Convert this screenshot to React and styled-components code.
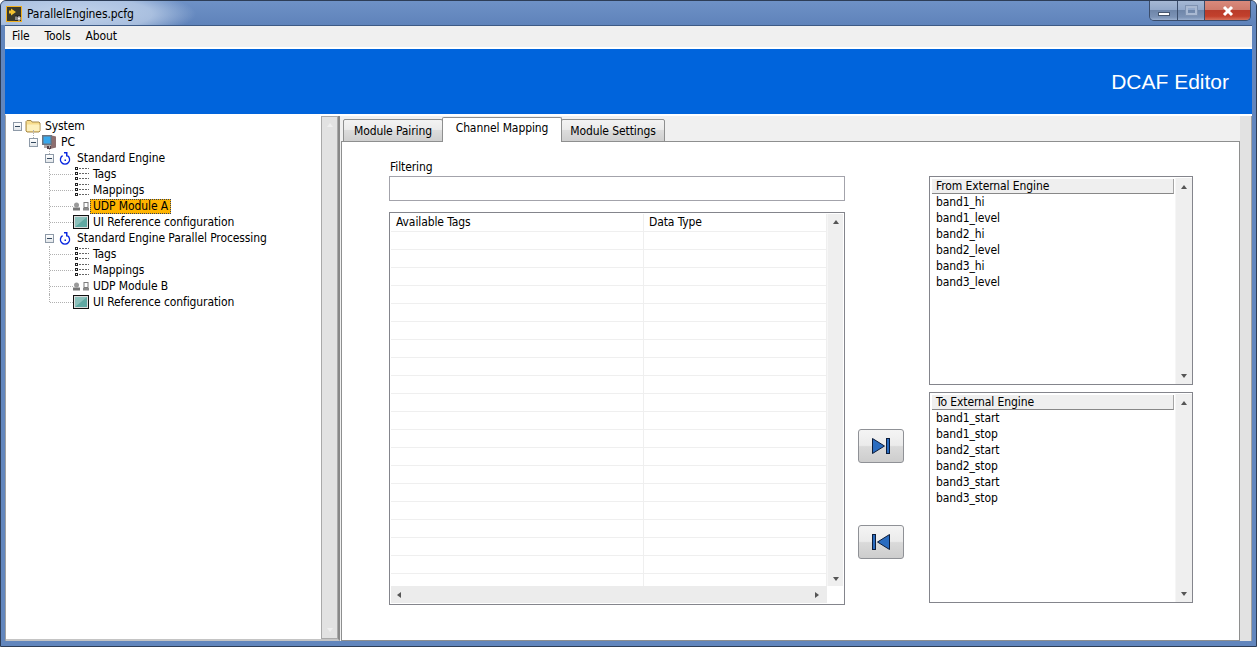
import React from 'react'
import styled, { createGlobalStyle } from 'styled-components'

const Global = createGlobalStyle`
  html, body { margin: 0; padding: 0; height: 100%; overflow: hidden; }
  #root { height: 647px; }
  * { box-sizing: border-box; }
  body {
    font-family: "DejaVu Sans Condensed", "Liberation Sans", Arial, sans-serif;
    font-size: 12px;
    letter-spacing: -0.1px;
    color: #000;
  }
`

const Window = styled.div`
  width: 1257px;
  height: 647px;
  display: flex;
  flex-direction: column;
  background: #6286bd;
  border: 1px solid #2d3d57;
  border-radius: 6px 6px 0 0;
  padding: 0 4px 5px;
  overflow: hidden;
`

const TitleBar = styled.div`
  height: 24px;
  flex: none;
  margin: 0 -4px;
  padding: 0 4px 0 5px;
  display: flex;
  align-items: flex-start;
  gap: 5px;
  background:
    radial-gradient(ellipse 125px 26px at 70px 13px, rgba(205, 220, 240, .9) 0, rgba(205, 220, 240, .65) 65%, rgba(205, 220, 240, 0) 100%),
    linear-gradient(#6e91c6, #5f83ba);
`

const AppIcon = styled.svg`
  width: 16px;
  height: 16px;
  margin-top: 5px;
  flex: none;
`

const TitleText = styled.span`
  margin-top: 5px;
  line-height: 16px;
  flex: 1;
`

const Caption = styled.div`
  display: flex;
  height: 20px;
  margin-right: 1px;
  border: 1px solid #3b4d6b;
  border-top: 0;
  border-radius: 0 0 5px 5px;
  overflow: hidden;
`

const CaptionButton = styled.div`
  width: ${p => p.$w}px;
  display: flex;
  align-items: center;
  justify-content: center;
  background: ${p => p.$close
    ? 'linear-gradient(#d98a7c 0, #cf7b6c 45%, #b93b2a 50%, #c2402c 80%, #d66f5a 100%)'
    : 'linear-gradient(#a5b8d4 0, #93a9ca 45%, #6f86a9 50%, #7c93b6 85%, #9bb0cf 100%)'};
  & + & { border-left: 1px solid #3b4d6b; }
`

const MinGlyph = styled.span`
  width: 12px;
  height: 4px;
  margin-top: 6px;
  background: #fff;
  border: 1px solid #46566e;
`

const MaxGlyph = styled.span`
  width: 11px;
  height: 9px;
  border: 2px solid #a9b9d2;
  outline: 1px solid #7f93b2;
`

const MenuBar = styled.div`
  height: 22px;
  flex: none;
  background: #f0f0f0;
  border-top: 1px solid #3d5a85;
  display: flex;
  align-items: center;
  padding: 0 0 2px 7px;
  gap: 15px;
`

const MenuItem = styled.span`
  line-height: 16px;
`

const Banner = styled.div`
  height: 67px;
  flex: none;
  background: #0064dc;
  border-top: 2px solid #fff;
  display: flex;
  align-items: center;
  justify-content: flex-end;
  padding: 0 23px 0 0;
  color: #fff;
  font-family: "Liberation Sans", Arial, sans-serif;
  font-size: 21px;
  letter-spacing: 0;
`

const Body = styled.div`
  flex: 1;
  min-height: 0;
  display: flex;
  background: #f0f0f0;
  border-top: 2px solid #fff;
  border-left: 1px solid #a0a0a0;
`

const TreePanel = styled.div`
  width: 334px;
  flex: none;
  display: flex;
  background: #fff;
  border-bottom: 2px solid #c4c4c4;
  border-right: 2px solid #888;
  margin-right: 1px;
`

const Tree = styled.div`
  flex: 1;
  padding-top: 2px;
`

const Row = styled.div`
  position: relative;
  height: 16px;
  display: flex;
  align-items: center;
  padding-left: ${p => p.$indent}px;
  white-space: nowrap;
`

const Expander = styled.span`
  width: 9px;
  height: 9px;
  flex: none;
  border: 1px solid #8e9aa8;
  background: linear-gradient(#fff, #e2e6ea);
  position: relative;
  &::after {
    content: '';
    position: absolute;
    left: 1px;
    top: 3px;
    width: 5px;
    height: 1px;
    background: #34495e;
  }
`

const Dots = styled.span`
  position: absolute;
  left: ${p => p.$x}px;
  top: ${p => p.$y}px;
  ${p => p.$h ? `height: ${p.$h}px; border-left: 1px dotted #b0b0b0;` : ''}
  ${p => p.$w ? `width: ${p.$w}px; border-top: 1px dotted #b0b0b0;` : ''}
`

const NodeIcon = styled.svg`
  flex: none;
  width: ${p => p.$size || 16}px;
  height: 16px;
  margin-left: ${p => p.$gap || 0}px;
`

const Label = styled.span`
  margin-left: ${p => p.$gap}px;
  line-height: 15px;
  ${p => p.$selected && `
    margin-left: 1px;
    padding: 0 3px;
    background: #ffb400;
    outline: 1px dotted #33405a;
    outline-offset: -1px;
  `}
`

const TreeScroll = styled.div`
  width: 17px;
  flex: none;
  background: #e2e2e2;
  border: 1px solid #a9a9a9;
  display: flex;
  flex-direction: column;
  justify-content: space-between;
  align-items: center;
  padding: 6px 0;
`

const Arrow = styled.span`
  width: 0;
  height: 0;
  border-style: solid;
  border-color: transparent;
  ${p => p.$dir === 'up' && `border-width: 0 3.5px 4px; border-bottom-color: ${p.$color || '#555'};`}
  ${p => p.$dir === 'down' && `border-width: 4px 3.5px 0; border-top-color: ${p.$color || '#555'};`}
  ${p => p.$dir === 'left' && `border-width: 3.5px 4px 3.5px 0; border-right-color: ${p.$color || '#555'};`}
  ${p => p.$dir === 'right' && `border-width: 3.5px 0 3.5px 4px; border-left-color: ${p.$color || '#555'};`}
`

const Right = styled.div`
  width: 899px;
  flex: none;
  display: flex;
  flex-direction: column;
  padding-top: 3px;
`

const Tabs = styled.div`
  height: 23px;
  flex: none;
  display: flex;
  align-items: flex-end;
  padding-left: 2px;
  margin-bottom: -1px;
`

const Tab = styled.div`
  position: relative;
  height: ${p => p.$active ? 25 : 23}px;
  width: ${p => p.$w}px;
  display: flex;
  align-items: ${p => p.$active ? 'flex-start' : 'center'};
  justify-content: center;
  padding-top: ${p => p.$active ? 3 : 0}px;
  border: 1px solid #8e8f8f;
  border-bottom: ${p => p.$active ? '0' : '1px solid #8e8f8f'};
  margin-left: ${p => p.$active ? -1 : 0}px;
  margin-right: ${p => p.$active ? -1 : 0}px;
  z-index: ${p => p.$active ? 2 : 1};
  background: ${p => p.$active ? '#fff' : 'linear-gradient(#f3f3f3, #ebebeb 45%, #dcdcdc 50%, #cfcfcf)'};
  border-radius: 2px 2px 0 0;
`

const Panel = styled.div`
  flex: 1;
  min-height: 0;
  background: #fff;
  border: 1px solid #8e8f8f;
  display: flex;
  align-items: flex-start;
  padding: 34px 0 0 47px;
`

const Column = styled.div`
  width: ${p => p.$w}px;
  flex: none;
  display: flex;
  flex-direction: column;
`

const FieldLabel = styled.label`
  line-height: 16px;
  height: 16px;
  margin: -17px 0 1px 1px;
`

const Input = styled.div`
  height: 25px;
  border: 1px solid #a3a3ab;
`

const Table = styled.div`
  margin-top: 11px;
  height: 393px;
  border: 1px solid #84858c;
  display: grid;
  grid-template-columns: 1fr 16px;
  grid-template-rows: 1fr 17px;
  padding: 1px;
`

const Rows = styled.div`
  overflow: hidden;
`

const TableRow = styled.div`
  height: 18px;
  display: grid;
  grid-template-columns: 253px 183px 1fr;
  border-bottom: 1px solid #efefef;
`

const Cell = styled.div`
  padding-left: 5px;
  line-height: 17px;
  border-right: 1px solid #efefef;
`

const ScrollY = styled.div`
  background: #efefef;
  border-left: 1px solid #f6f6f6;
  display: flex;
  flex-direction: column;
  justify-content: space-between;
  align-items: center;
  padding: 6px 0 5px;
`

const ScrollX = styled.div`
  background: #ececec;
  display: flex;
  justify-content: space-between;
  align-items: center;
  padding: 0 8px 0 6px;
`

const Buttons = styled.div`
  display: flex;
  flex-direction: column;
  flex: none;
  margin: 0 25px 0 13px;
  padding-top: 253px;
  gap: 62px;
`

const MoveButton = styled.button`
  width: 46px;
  height: 34px;
  padding: 0;
  display: flex;
  align-items: center;
  justify-content: center;
  border: 1px solid #8f9196;
  border-radius: 3px;
  background: linear-gradient(#f4f4f4, #ebebeb 48%, #dadada 52%, #cdcdcd);
`

const MoveIcon = styled.svg`
  width: 20px;
  height: 18px;
`

const ListBox = styled.div`
  height: ${p => p.$h}px;
  margin-bottom: ${p => p.$mb || 0}px;
  border: 1px solid #84858c;
  display: grid;
  grid-template-columns: 1fr 17px;
  padding: 2px 0 0 2px;
`

const ListColumn = styled.div`
  display: flex;
  flex-direction: column;
`

const ListHead = styled.div`
  height: 14px;
  margin-right: 1px;
  padding-left: 4px;
  line-height: 14px;
  background: #efefef;
  border-right: 1px solid #a5a5a5;
  border-bottom: 1px solid #888;
  box-sizing: content-box;
`

const ListItem = styled.div`
  height: 16px;
  line-height: 16px;
  padding-left: 4px;
`

const ListScroll = styled(ScrollY)`
  margin-top: -1px;
  padding: 7px 0 6px;
`

const Side = styled.div`
  flex: 1;
  background: #e2e2e2;
  border-right: 1px solid #a0a0a0;
`

const AppGlyph = () => (
  <AppIcon viewBox="0 0 16 16">
    <rect x=".5" y=".5" width="15" height="15" fill="#3a3a2c" stroke="#f0b020" />
    <path d="M3 4.5h2V2.5l5 3.5-5 3.5V7.5H3z" fill="#f4c430" />
    <rect x="9" y="9" width="6" height="6" fill="#2a2a2a" />
    <path d="M10 10.5v3.5M12 11h2v3h-2zM12 12.5h2" stroke="#fff" fill="none" strokeWidth=".9" />
  </AppIcon>
)

const FolderIcon = () => (
  <NodeIcon viewBox="0 0 16 16" $gap={3}>
    <path d="M1 13V3.5L2 2.5h4l1 1.5h7l1 1v8l-1 1H2z" fill="#f7dc8c" stroke="#a68a4c" />
    <path d="M2 6.5h12.5V13H2z" fill="#fdf0bd" />
  </NodeIcon>
)

const PcIcon = () => (
  <NodeIcon viewBox="0 0 16 16" $gap={3}>
    <path d="M9 1l6 1.5v11L9 15z" fill="#8d6f70" />
    <rect x="1" y="1" width="10" height="10" fill="#6c7480" />
    <rect x="2.5" y="2.5" width="7" height="7" fill="#38a8ec" />
    <path d="M3 11h7v3H3z" fill="#b0a8a8" />
    <rect x="6" y="12" width="4" height="3" fill="#55424a" />
  </NodeIcon>
)

const LoopIcon = () => (
  <NodeIcon viewBox="0 0 12 16" $size={12} $gap={5}>
    <path d="M3.6 5.6a4.6 4.6 0 1 0 4.8 0" fill="none" stroke="#0a28e0" strokeWidth="1.3" />
    <path d="M8.5 2v4.5H7V3.5H5V2z" fill="#0a28e0" />
    <rect x="5.5" y="9.5" width="1.5" height="1.5" fill="#0a28e0" />
  </NodeIcon>
)

const ListIcon = () => (
  <NodeIcon viewBox="0 0 16 16">
    <g fill="none" stroke="#222">
      <rect x="2.5" y="1.5" width="2" height="2" />
      <rect x="2.5" y="6.5" width="2" height="2" />
      <rect x="2.5" y="11.5" width="2" height="2" />
    </g>
    <path d="M6 2.5h10M6 7.5h10M6 12.5h10" stroke="#666" strokeDasharray="2 1" fill="none" />
  </NodeIcon>
)

const NetIcon = () => (
  <NodeIcon viewBox="0 0 16 16">
    <circle cx="3.5" cy="7" r="2.5" fill="#9a9a9a" />
    <rect x="0" y="9.5" width="7" height="3" fill="#777" />
    <rect x="11" y="4.5" width="4" height="5" fill="#fff" stroke="#7d7d7d" />
    <rect x="10" y="10" width="6" height="2.5" fill="#8a8a8a" />
  </NodeIcon>
)

const ScreenIcon = () => (
  <NodeIcon viewBox="0 0 16 16">
    <rect x=".5" y="1.5" width="15" height="13" fill="#dcdcdc" stroke="#111" />
    <rect x="2" y="3" width="12" height="10" fill="#5fa8a2" />
    <path d="M2 3h12L2 13z" fill="#a8d0cc" opacity=".6" />
  </NodeIcon>
)

const Leaf = ({ children, icon, last, selected }) => (
  <Row $indent={67}>
    <Dots $x={43} $y={0} $h={last ? 8 : 16} />
    <Dots $x={44} $y={8} $w={23} />
    {icon}
    <Label $gap={4} $selected={selected}>{children}</Label>
  </Row>
)

const EngineChildren = ({ selected, last }) => (
  <>
    <Leaf icon={<ListIcon />}>Tags</Leaf>
    <Leaf icon={<ListIcon />}>Mappings</Leaf>
    <Leaf icon={<NetIcon />} selected={selected}>{selected ? 'UDP Module A' : 'UDP Module B'}</Leaf>
    <Leaf icon={<ScreenIcon />} last={last}>UI Reference configuration</Leaf>
  </>
)

const from = ['band1_hi', 'band1_level', 'band2_hi', 'band2_level', 'band3_hi', 'band3_level']
const to = ['band1_start', 'band1_stop', 'band2_start', 'band2_stop', 'band3_start', 'band3_stop']

const List = ({ title, items, h, mb }) => (
  <ListBox $h={h} $mb={mb}>
    <ListColumn>
      <ListHead>{title}</ListHead>
      {items.map(item => <ListItem key={item}>{item}</ListItem>)}
    </ListColumn>
    <ListScroll>
      <Arrow $dir="up" />
      <Arrow $dir="down" />
    </ListScroll>
  </ListBox>
)

export default function App () {
  return (
    <Window>
      <Global />
      <TitleBar>
        <AppGlyph />
        <TitleText>ParallelEngines.pcfg</TitleText>
        <Caption>
          <CaptionButton $w={27}><MinGlyph /></CaptionButton>
          <CaptionButton $w={27}><MaxGlyph /></CaptionButton>
          <CaptionButton $w={46} $close>
            <svg width="14" height="12" viewBox="0 0 14 12">
              <path d="M3 2l8 8M11 2l-8 8" stroke="#fff" strokeWidth="3" />
            </svg>
          </CaptionButton>
        </Caption>
      </TitleBar>
      <MenuBar>
        <MenuItem>File</MenuItem>
        <MenuItem>Tools</MenuItem>
        <MenuItem>About</MenuItem>
      </MenuBar>
      <Banner>DCAF Editor</Banner>
      <Body>
        <TreePanel>
          <Tree>
            <Row $indent={7}>
              <Expander />
              <FolderIcon />
              <Label $gap={4}>System</Label>
            </Row>
            <Row $indent={23}>
              <Dots $x={27} $y={-4} $h={8} />
              <Expander />
              <PcIcon />
              <Label $gap={4}>PC</Label>
            </Row>
            <Row $indent={39}>
              <Dots $x={43} $y={-4} $h={8} />
              <Expander />
              <LoopIcon />
              <Label $gap={6}>Standard Engine</Label>
            </Row>
            <EngineChildren selected />
            <Row $indent={39}>
              <Expander />
              <LoopIcon />
              <Label $gap={6}>Standard Engine Parallel Processing</Label>
            </Row>
            <EngineChildren last />
          </Tree>
          <TreeScroll>
            <Arrow $dir="up" $color="#efefef" />
            <Arrow $dir="down" $color="#efefef" />
          </TreeScroll>
        </TreePanel>
        <Right>
          <Tabs>
            <Tab $w={100}>Module Pairing</Tab>
            <Tab $w={120} $active>Channel Mapping</Tab>
            <Tab $w={104}>Module Settings</Tab>
          </Tabs>
          <Panel>
            <Column $w={456}>
              <FieldLabel>Filtering</FieldLabel>
              <Input />
              <Table>
                <Rows>
                  <TableRow>
                    <Cell>Available Tags</Cell>
                    <Cell>Data Type</Cell>
                    <Cell />
                  </TableRow>
                  {Array.from({ length: 20 }, (_, i) => (
                    <TableRow key={i}><Cell /><Cell /><Cell /></TableRow>
                  ))}
                </Rows>
                <ScrollY>
                  <Arrow $dir="up" />
                  <Arrow $dir="down" />
                </ScrollY>
                <ScrollX>
                  <Arrow $dir="left" />
                  <Arrow $dir="right" />
                </ScrollX>
              </Table>
            </Column>
            <Buttons>
              <MoveButton aria-label="Add">
                <MoveIcon viewBox="0 0 20 18">
                  <path d="M1.5 1.5l12 7.5-12 7.5z" fill="#2a6cc0" stroke="#0c1c3a" />
                  <rect x="15.5" y="1.5" width="3" height="15" fill="#2a6cc0" stroke="#0c1c3a" />
                </MoveIcon>
              </MoveButton>
              <MoveButton aria-label="Remove">
                <MoveIcon viewBox="0 0 20 18">
                  <path d="M18.5 1.5l-12 7.5 12 7.5z" fill="#2a6cc0" stroke="#0c1c3a" />
                  <rect x="1.5" y="1.5" width="3" height="15" fill="#2a6cc0" stroke="#0c1c3a" />
                </MoveIcon>
              </MoveButton>
            </Buttons>
            <Column $w={264}>
              <List title="From External Engine" items={from} h={209} mb={7} />
              <List title="To External Engine" items={to} h={211} />
            </Column>
          </Panel>
        </Right>
        <Side />
      </Body>
    </Window>
  )
}
